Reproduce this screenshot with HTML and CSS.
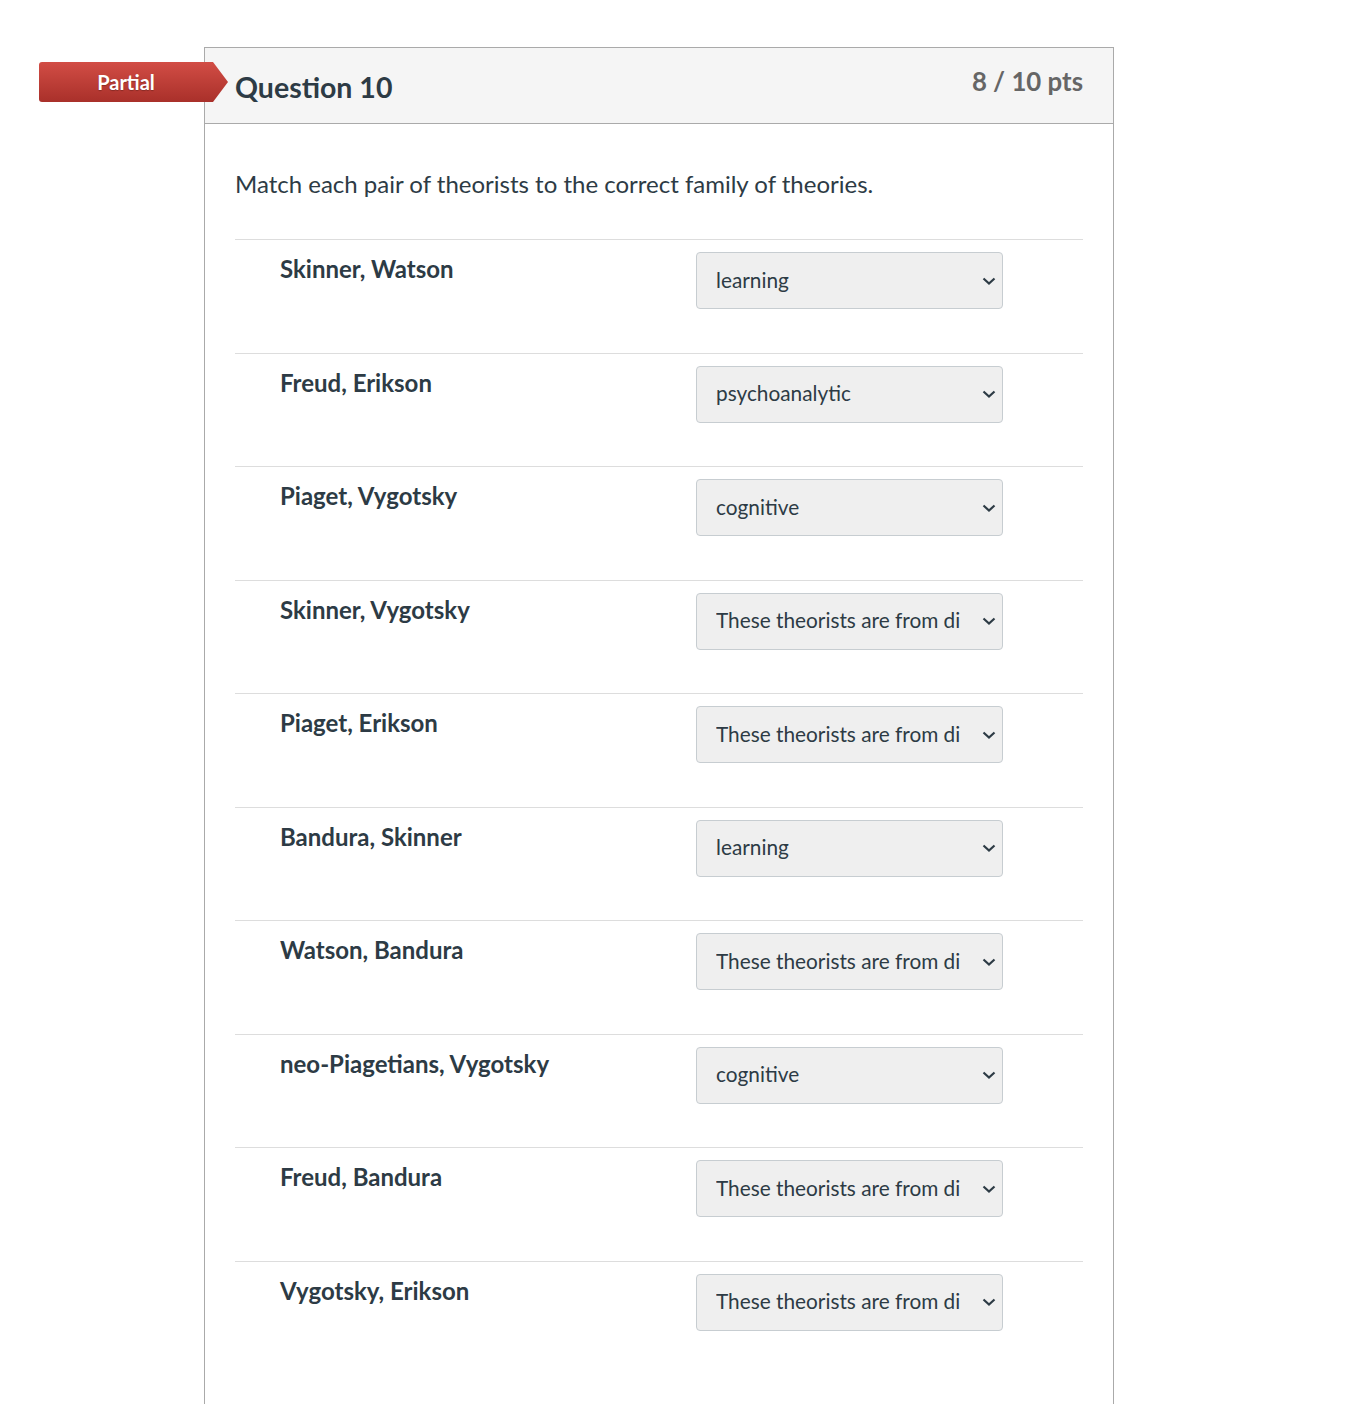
FILE: index.html
```html
<!DOCTYPE html>
<html>
<head>
<meta charset="utf-8">
<link rel="stylesheet" href="styles.css">
</head>
<body>
<div class="page">
  <div class="card">
    <div class="badge">Partial</div>
    <div class="card-header">
      <h2 class="q-title">Question 10</h2>
      <div class="q-pts">8 / 10 pts</div>
    </div>
    <div class="card-body">
      <p class="q-text">Match each pair of theorists to the correct family of theories.</p>
      <div class="rows">
        <div class="row"><div class="label">Skinner, Watson</div><div class="select"><span class="val">learning</span><svg class="chev" viewBox="0 0 14 8"><path d="M1.5 1.5 L7 6.5 L12.5 1.5" /></svg></div></div>
        <div class="row"><div class="label">Freud, Erikson</div><div class="select"><span class="val">psychoanalytic</span><svg class="chev" viewBox="0 0 14 8"><path d="M1.5 1.5 L7 6.5 L12.5 1.5" /></svg></div></div>
        <div class="row"><div class="label">Piaget, Vygotsky</div><div class="select"><span class="val">cognitive</span><svg class="chev" viewBox="0 0 14 8"><path d="M1.5 1.5 L7 6.5 L12.5 1.5" /></svg></div></div>
        <div class="row"><div class="label">Skinner, Vygotsky</div><div class="select"><span class="val">These theorists are from different families</span><svg class="chev" viewBox="0 0 14 8"><path d="M1.5 1.5 L7 6.5 L12.5 1.5" /></svg></div></div>
        <div class="row"><div class="label">Piaget, Erikson</div><div class="select"><span class="val">These theorists are from different families</span><svg class="chev" viewBox="0 0 14 8"><path d="M1.5 1.5 L7 6.5 L12.5 1.5" /></svg></div></div>
        <div class="row"><div class="label">Bandura, Skinner</div><div class="select"><span class="val">learning</span><svg class="chev" viewBox="0 0 14 8"><path d="M1.5 1.5 L7 6.5 L12.5 1.5" /></svg></div></div>
        <div class="row"><div class="label">Watson, Bandura</div><div class="select"><span class="val">These theorists are from different families</span><svg class="chev" viewBox="0 0 14 8"><path d="M1.5 1.5 L7 6.5 L12.5 1.5" /></svg></div></div>
        <div class="row"><div class="label">neo-Piagetians, Vygotsky</div><div class="select"><span class="val">cognitive</span><svg class="chev" viewBox="0 0 14 8"><path d="M1.5 1.5 L7 6.5 L12.5 1.5" /></svg></div></div>
        <div class="row"><div class="label">Freud, Bandura</div><div class="select"><span class="val">These theorists are from different families</span><svg class="chev" viewBox="0 0 14 8"><path d="M1.5 1.5 L7 6.5 L12.5 1.5" /></svg></div></div>
        <div class="row"><div class="label">Vygotsky, Erikson</div><div class="select"><span class="val">These theorists are from different families</span><svg class="chev" viewBox="0 0 14 8"><path d="M1.5 1.5 L7 6.5 L12.5 1.5" /></svg></div></div>
      </div>
    </div>
  </div>
</div>
</body>
</html>
```

FILE: styles.css
```css
html, body {
  margin: 0;
  padding: 0;
  background: #fff;
}
body {
  font-family: Lato, "Liberation Sans", sans-serif;
  color: #2d3b45;
}
.page {
  padding: 47px 0 0 204px;
}
.card {
  position: relative;
  width: 910px;
  height: 1400px;
  border: 1px solid #aaaaaa;
  border-bottom: none;
  box-sizing: border-box;
}
.badge {
  position: absolute;
  left: -166px;
  top: 14px;
  width: 189px;
  height: 40px;
  box-sizing: border-box;
  padding-right: 15px;
  background: linear-gradient(#d24d45, #a9302a);
  clip-path: polygon(0 0, 174px 0, 189px 50%, 174px 100%, 0 100%);
  border-radius: 3px 0 0 3px;
  color: #fff;
  font-weight: 700;
  font-size: 20px;
  line-height: 40px;
  text-align: center;
  text-shadow: 0 1px 1px rgba(0,0,0,0.25);
}
.card-header {
  display: flex;
  justify-content: space-between;
  background: #f5f5f5;
  border-bottom: 1px solid #aaaaaa;
  height: 76px;
  box-sizing: border-box;
  padding: 0 30px 0 30px;
}
.q-title {
  margin: 0;
  padding-top: 22px;
  font-size: 28.5px;
  line-height: 34px;
  font-weight: 700;
  color: #2d3b45;
}
.q-pts {
  padding-top: 16px;
  font-size: 25.8px;
  line-height: 34px;
  font-weight: 700;
  color: #666666;
}
.card-body {
  padding: 0 30px 0 30px;
}
.q-text {
  margin: 0;
  padding-top: 44px;
  font-size: 24px;
  line-height: 32px;
  height: 71px;
  box-sizing: content-box;
  padding-bottom: 0;
}
.rows {
  display: flex;
  flex-direction: column;
}
.row {
  display: flex;
  border-top: 1px solid #dddddd;
  padding-top: 12px;
  height: 113.5px;
  box-sizing: border-box;
}
.label {
  width: 416px;
  padding-left: 45px;
  font-size: 24px;
  font-weight: 700;
  line-height: 34px;
  color: #2d3b45;
}
.select {
  display: flex;
  align-items: center;
  width: 307px;
  height: 57px;
  box-sizing: border-box;
  background: #efefef;
  border: 1px solid #c7cdd1;
  border-radius: 4px;
  padding: 0 6px 0 19px;
}
.val {
  flex: 1;
  white-space: nowrap;
  overflow: hidden;
  font-size: 20.8px;
  line-height: 26px;
  padding-bottom: 2px;
  color: #2d3b45;
  margin-right: 22px;
}
.chev {
  width: 14px;
  height: 8px;
  fill: none;
  stroke: #2d3b45;
  stroke-width: 2.2;
  flex: none;
}
```
